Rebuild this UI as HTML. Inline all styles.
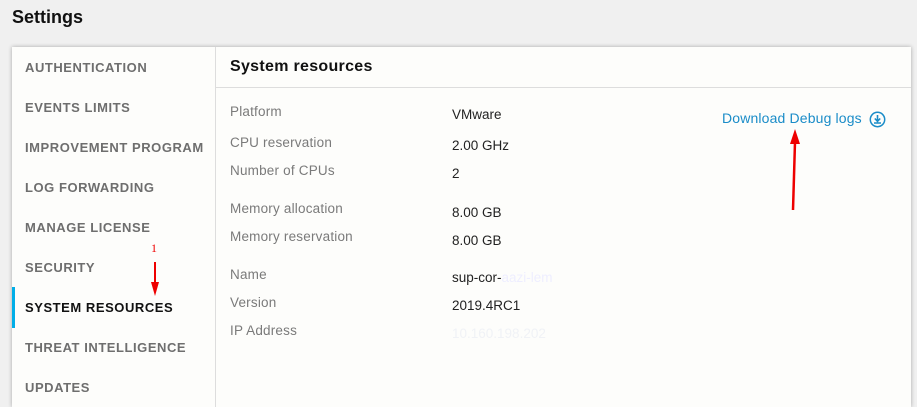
<!DOCTYPE html>
<html><head><meta charset="utf-8"><style>
body{margin:0;width:917px;height:401px;background:#f0f0f0;font-family:"Liberation Sans",sans-serif;position:relative;overflow:hidden}
.a{position:absolute;white-space:nowrap}
h1{position:absolute;left:12px;top:7px;margin:0;font-size:18px;font-weight:bold;color:#111}
.panel{position:absolute;left:12px;top:47px;width:899px;height:360px;background:#fdfdfb;box-shadow:0 0 4px rgba(0,0,0,.3)}
.side{position:absolute;left:0;top:0;width:203px;height:100%;border-right:1px solid #ddd}
.nav{position:absolute;left:13px;font-size:13px;font-weight:bold;color:#6e6e6e;letter-spacing:.55px}
.lbl{position:absolute;left:218px;font-size:13.5px;color:#7a7a7a;letter-spacing:.2px}
.val{position:absolute;left:440px;font-size:13.5px;color:#222}
</style></head><body>
<h1>Settings</h1>
<div class="panel">
<div class="side">
<div class="nav" style="top:13px">AUTHENTICATION</div>
<div class="nav" style="top:53px">EVENTS LIMITS</div>
<div class="nav" style="top:93px">IMPROVEMENT PROGRAM</div>
<div class="nav" style="top:133px">LOG FORWARDING</div>
<div class="nav" style="top:173px">MANAGE LICENSE</div>
<div class="nav" style="top:213px">SECURITY</div>
<div style="position:absolute;left:0;top:240px;width:3px;height:41px;background:#00aee8"></div>
<div class="nav" style="top:253px;color:#111">SYSTEM RESOURCES</div>
<div class="nav" style="top:293px">THREAT INTELLIGENCE</div>
<div class="nav" style="top:333px">UPDATES</div>
</div>
<div style="position:absolute;left:204px;right:0;top:40px;border-top:1px solid #ddd"></div>
<div class="a" style="left:218px;top:11px;font-size:16px;font-weight:bold;color:#111;letter-spacing:.3px">System resources</div>
<div class="lbl" style="top:57px">Platform</div><div class="val" style="top:60px">VMware</div>
<div class="lbl" style="top:88px">CPU reservation</div><div class="val" style="top:91px">2.00 GHz</div>
<div class="lbl" style="top:116px">Number of CPUs</div><div class="val" style="top:119px">2</div>
<div class="lbl" style="top:154px">Memory allocation</div><div class="val" style="top:158px">8.00 GB</div>
<div class="lbl" style="top:182px">Memory reservation</div><div class="val" style="top:186px">8.00 GB</div>
<div class="lbl" style="top:220px">Name</div><div class="val" style="top:223px">sup-cor-<span style="color:#eef">aazi-lem</span></div>
<div class="lbl" style="top:248px">Version</div><div class="val" style="top:251px">2019.4RC1</div>
<div class="lbl" style="top:276px">IP Address</div><div class="val" style="top:279px;color:#f0f2f6">10.160.198.202</div>
<div class="a" style="left:710px;top:63px;font-size:14px;color:#1a8cc8;letter-spacing:.15px">Download Debug logs</div>
<svg class="a" style="left:857px;top:64px" width="17" height="17" viewBox="0 0 17 17"><circle cx="8.5" cy="8.5" r="7.2" fill="none" stroke="#1a8cc8" stroke-width="1.5"/><path d="M8.5 4v6M5.8 7.5l2.7 2.8 2.7-2.8M5 12h7" fill="none" stroke="#1a8cc8" stroke-width="1.6"/></svg>
</div>
<svg class="a" style="left:0;top:0" width="917" height="401">
<text x="151" y="252" font-size="12" fill="#e00" font-family="Liberation Serif">1</text>
<path d="M155 262 L155 284" stroke="#e00" stroke-width="2"/><path d="M151 282 L155 296 L159 282Z" fill="#e00"/>
<path d="M793 210 L795 142" stroke="#e00" stroke-width="2.5"/><path d="M790 144 L795 129 L800 144Z" fill="#e00"/>
</svg>
</body></html>
